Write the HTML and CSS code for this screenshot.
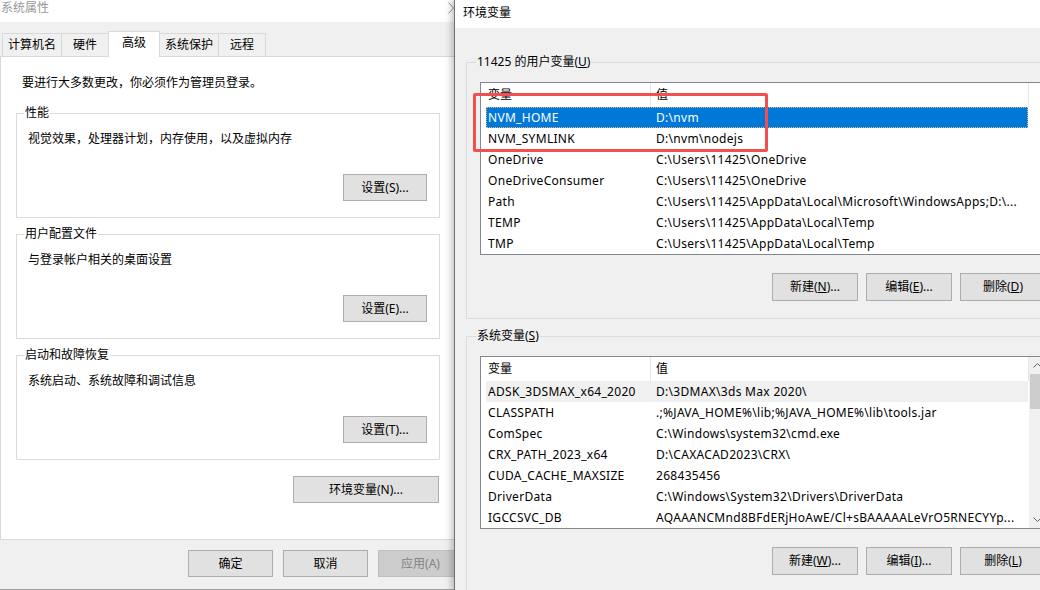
FILE: index.html
```html
<!DOCTYPE html>
<html lang="zh-CN">
<head>
    <meta charset="UTF-8">
    <title>系统属性 - 环境变量</title>
    <link rel="stylesheet" href="styles.css">
</head>
<body>
<div class="desk">

    <!-- 系统属性 窗口 -->
    <div class="sysprop">
        <div class="titlebar">
            <span>系统属性</span>
            <svg class="close-part" width="6" height="14" viewBox="0 0 6 14"><path d="M0.5 1.5 L5.5 7 L0.5 12.5" fill="none" stroke="#9a9a9a" stroke-width="1"/></svg>
        </div>
        <div class="tabs">
            <div class="tab">计算机名</div>
            <div class="tab">硬件</div>
            <div class="tab active">高级</div>
            <div class="tab">系统保护</div>
            <div class="tab">远程</div>
        </div>
        <div class="tab-panel">
            <p class="note">要进行大多数更改，你必须作为管理员登录。</p>

            <fieldset class="group">
                <legend>性能</legend>
                <p>视觉效果，处理器计划，内存使用，以及虚拟内存</p>
                <div class="btn-row"><button class="btn">设置(S)...</button></div>
            </fieldset>

            <fieldset class="group">
                <legend>用户配置文件</legend>
                <p>与登录帐户相关的桌面设置</p>
                <div class="btn-row"><button class="btn">设置(E)...</button></div>
            </fieldset>

            <fieldset class="group">
                <legend>启动和故障恢复</legend>
                <p>系统启动、系统故障和调试信息</p>
                <div class="btn-row"><button class="btn">设置(T)...</button></div>
            </fieldset>

            <div class="env-row"><button class="btn wide">环境变量(N)...</button></div>
        </div>
        <div class="dialog-buttons">
            <button class="btn">确定</button>
            <button class="btn">取消</button>
            <button class="btn" disabled>应用(A)</button>
        </div>
    </div>

    <!-- 环境变量 窗口 -->
    <div class="envvars">
        <div class="titlebar">环境变量</div>

        <fieldset class="env-group">
            <legend>11425 的用户变量(<u>U</u>)</legend>
            <div class="listview">
                <div class="lv-main">
                    <div class="lv-head"><div class="c1">变量</div><div class="c2">值</div></div>
                    <div class="lv-row selected"><div class="c1">NVM_HOME</div><div class="c2">D:\nvm</div></div>
                    <div class="lv-row"><div class="c1">NVM_SYMLINK</div><div class="c2">D:\nvm\nodejs</div></div>
                    <div class="lv-row"><div class="c1">OneDrive</div><div class="c2">C:\Users\11425\OneDrive</div></div>
                    <div class="lv-row"><div class="c1">OneDriveConsumer</div><div class="c2">C:\Users\11425\OneDrive</div></div>
                    <div class="lv-row"><div class="c1">Path</div><div class="c2">C:\Users\11425\AppData\Local\Microsoft\WindowsApps;D:\...</div></div>
                    <div class="lv-row"><div class="c1">TEMP</div><div class="c2">C:\Users\11425\AppData\Local\Temp</div></div>
                    <div class="lv-row"><div class="c1">TMP</div><div class="c2">C:\Users\11425\AppData\Local\Temp</div></div>
                </div>
            </div>
            <div class="btn-row">
                <button class="btn">新建(<u>N</u>)...</button>
                <button class="btn">编辑(<u>E</u>)...</button>
                <button class="btn">删除(<u>D</u>)</button>
            </div>
        </fieldset>

        <fieldset class="env-group second">
            <legend>系统变量(<u>S</u>)</legend>
            <div class="listview">
                <div class="lv-main">
                    <div class="lv-head"><div class="c1">变量</div><div class="c2">值</div></div>
                    <div class="lv-row inactive-sel"><div class="c1">ADSK_3DSMAX_x64_2020</div><div class="c2">D:\3DMAX\3ds Max 2020\</div></div>
                    <div class="lv-row"><div class="c1">CLASSPATH</div><div class="c2">.;%JAVA_HOME%\lib;%JAVA_HOME%\lib\tools.jar</div></div>
                    <div class="lv-row"><div class="c1">ComSpec</div><div class="c2">C:\Windows\system32\cmd.exe</div></div>
                    <div class="lv-row"><div class="c1">CRX_PATH_2023_x64</div><div class="c2">D:\CAXACAD2023\CRX\</div></div>
                    <div class="lv-row"><div class="c1">CUDA_CACHE_MAXSIZE</div><div class="c2">268435456</div></div>
                    <div class="lv-row"><div class="c1">DriverData</div><div class="c2">C:\Windows\System32\Drivers\DriverData</div></div>
                    <div class="lv-row"><div class="c1">IGCCSVC_DB</div><div class="c2">AQAAANCMnd8BFdERjHoAwE/Cl+sBAAAAALeVrO5RNECYYp...</div></div>
                </div>
                <div class="scrollbar">
                    <div class="sb-arrow"><svg width="9" height="5" viewBox="0 0 9 5"><polyline points="0.5,4.5 4.5,0.5 8.5,4.5" fill="none" stroke="#606060"/></svg></div>
                    <div class="sb-thumb"></div>
                    <div class="sb-track"></div>
                    <div class="sb-arrow"><svg width="9" height="5" viewBox="0 0 9 5"><polyline points="0.5,0.5 4.5,4.5 8.5,0.5" fill="none" stroke="#606060"/></svg></div>
                </div>
            </div>
            <div class="btn-row">
                <button class="btn">新建(<u>W</u>)...</button>
                <button class="btn">编辑(<u>I</u>)...</button>
                <button class="btn">删除(<u>L</u>)</button>
            </div>
        </fieldset>

        <!-- 红框标注 -->
        <div class="mark"></div>
    </div>

</div>
</body>
</html>
```

FILE: styles.css
```css
* {
    box-sizing: border-box;
}

body {
    margin: 0;
    width: 1040px;
    height: 590px;
    overflow: hidden;
    background: #fff;
    font-family: "Noto Sans", "Noto Sans CJK SC", sans-serif;
    font-size: 12px;
    line-height: 16px;
    color: #000;
}

.desk {
    display: flex;
    align-items: flex-start;
    height: 590px;
}

/* ---------- 系统属性 ---------- */
.sysprop {
    flex: none;
    width: 454px;
    height: 590px;
    overflow: hidden;
    background: #f0f0f0;
    border-bottom: 1px solid #a0a0a0;
}

.sysprop .titlebar {
    height: 22px;
    background: #fff;
    color: #999;
    padding-left: 1px;
    display: flex;
    justify-content: space-between;
}

.close-part {
    margin-top: 1px;
    margin-right: 0;
}

.tabs {
    display: flex;
    align-items: flex-end;
    padding: 11px 0 0 2px;
    height: 34px;
}

.tab {
    height: 23px;
    min-width: 48px;
    padding: 3px 5px 0;
    margin-left: -1px;
    border: 1px solid #d9d9d9;
    border-bottom: none;
    text-align: center;
    white-space: nowrap;
}

.tab:first-child {
    margin-left: 0;
}

.tab.active {
    position: relative;
    z-index: 1;
    height: 26px;
    min-width: 52px;
    margin-bottom: -1px;
    background: #fff;
}

.tab-panel {
    background: #fff;
    border: 1px solid #d9d9d9;
    border-right: none;
    padding: 18px 0 36px 15px;
}

.note {
    margin: 0 0 14px 6px;
}

.group {
    width: 424px;
    margin: 8px 0 0;
    min-width: 0;
    border: 1px solid #dcdcdc;
    padding: 10px 12px 16px 7px;
}

.note + .group {
    margin-top: 0;
}

.group legend,
.env-group legend {
    padding: 0 1px;
    line-height: 16px;
}

.group p {
    margin: 0 0 0 4px;
}

.group .btn-row {
    display: flex;
    justify-content: flex-end;
    margin-top: 27px;
}

.env-row {
    width: 423px;
    display: flex;
    justify-content: flex-end;
    margin-top: 16px;
}

.btn {
    font: inherit;
    line-height: 16px;
    width: 84px;
    height: 27px;
    padding: 0;
    background: #e1e1e1;
    border: 1px solid #adadad;
    border-radius: 0;
    color: #000;
    white-space: nowrap;
}

.btn.wide {
    width: 146px;
}

.btn:disabled {
    background: #cccccc;
    border-color: #bfbfbf;
    color: #838383;
}

.dialog-buttons {
    display: flex;
    gap: 10px;
    padding-left: 188px;
    margin-top: 10px;
}

.dialog-buttons .btn {
    flex: none;
    width: 85px;
}

/* ---------- 环境变量 ---------- */
.envvars {
    flex: none;
    position: relative;
    z-index: 1;
    width: 620px;
    height: 590px;
    background: #f0f0f0;
    border-left: 1px solid #707070;
    box-shadow: -3px 0 6px rgba(0, 0, 0, 0.22);
}

.envvars .titlebar {
    height: 28px;
    background: #fff;
    padding: 5px 0 0 8px;
}

.env-group {
    width: 595px;
    margin: 26px 0 0 11px;
    min-width: 0;
    border: 1px solid #dcdcdc;
    padding: 12px 14px 17px 9px;
}

.env-group.second {
    margin-top: 9px;
}

.listview {
    width: 566px;
    margin-left: 4px;
    display: flex;
    background: #fff;
    border: 1px solid #828790;
}

.lv-main {
    flex: 1;
}

.lv-head {
    display: flex;
    height: 24px;
}

.lv-head > div {
    height: 24px;
    padding-top: 4px;
    border-right: 1px solid #e5e5e5;
}

.lv-head .c1 {
    width: 170px;
    padding-left: 7px;
}

.lv-head .c2 {
    width: 378px;
    padding-left: 5px;
}

.lv-row {
    display: flex;
    width: 542px;
    height: 21px;
    line-height: 21px;
    margin-left: 5px;
    white-space: nowrap;
    letter-spacing: 0.3px;
}

.lv-row .c1 {
    width: 164px;
    padding-left: 2px;
    overflow: hidden;
}

.lv-row .c2 {
    width: 378px;
    padding-left: 6px;
    overflow: hidden;
}

.lv-row.selected {
    background: #0078d7;
    color: #fff;
    outline: 1px dotted #e8b27a;
    outline-offset: -1px;
}

.lv-row.inactive-sel {
    background: #f0f0f0;
}

.scrollbar {
    width: 17px;
    flex: none;
    display: flex;
    flex-direction: column;
    background: #f0f0f0;
}

.sb-arrow {
    height: 17px;
    display: flex;
    align-items: center;
    justify-content: center;
}

.sb-thumb {
    height: 35px;
    margin: 0 1px;
    background: #cdcdcd;
}

.sb-track {
    flex: 1;
}

.env-group .btn-row {
    width: 566px;
    margin: 18px 0 0 4px;
    display: flex;
    justify-content: flex-end;
    gap: 8px;
}

.env-group .btn {
    width: 86px;
    height: 28px;
}

/* 红框 */
.mark {
    position: absolute;
    left: 18px;
    top: 93px;
    width: 295px;
    height: 59px;
    border: 3px solid #f25050;
    border-radius: 2px;
}
```
